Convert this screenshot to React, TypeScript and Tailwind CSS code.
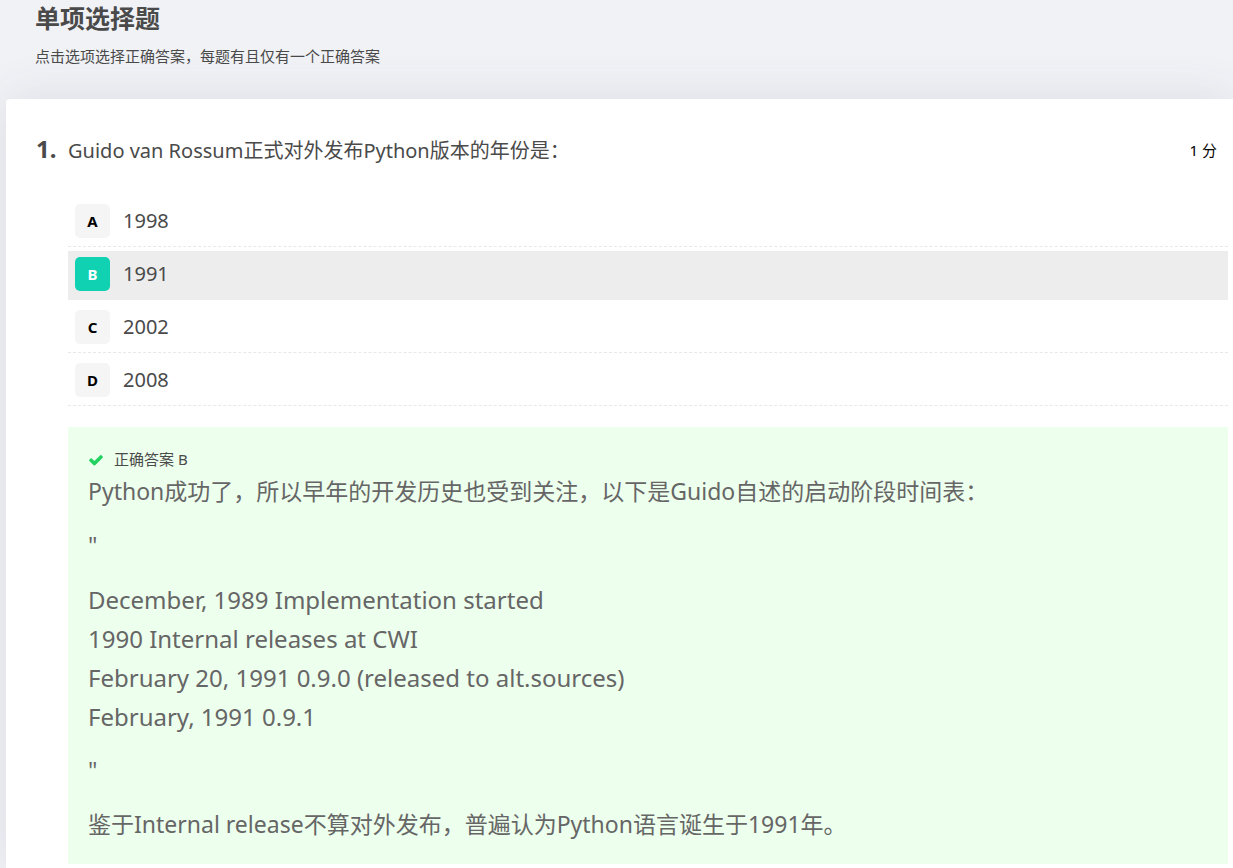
import React, { useState } from "react";

const options = [
	{ key: "A", text: "1998" },
	{ key: "B", text: "1991" },
	{ key: "C", text: "2002" },
	{ key: "D", text: "2008" },
];

const Option = ({
	label,
	text,
	active,
	onSelect,
}: {
	label: string;
	text: string;
	active: boolean;
	onSelect: () => void;
}) => {
	return (
		<button
			type="button"
			aria-pressed={active}
			onClick={onSelect}
			className={`flex h-[49px] w-full items-center gap-[13px] border-b border-dashed pb-[2px] pl-[7px] text-left ${
				active ? "border-[#ededed] bg-[#ededed]" : "border-[#e8e8e8]"
			}`}
		>
			<span
				className={`flex h-[34px] w-[35px] items-center justify-center rounded-[5px] text-[15px] font-bold ${
					active ? "bg-[#11d1b3] text-white" : "bg-[#f5f5f5] text-black"
				}`}
			>
				{label}
			</span>
			<span className="text-xl text-[#4a4a4a]">{text}</span>
		</button>
	);
};

const Answer = () => {
	return (
		<div className="mt-[21px] bg-[#edffed] p-5">
			<div className="flex h-[25px] items-center gap-[10px] text-[15px] text-[#4a4a4a]">
				<svg viewBox="0 0 1792 1792" className="size-4 fill-[#23d160]" aria-hidden="true">
					<path d="M1671 566q0 40-28 68l-724 724-136 136q-28 28-68 28t-68-28l-136-136-362-362q-28-28-28-68t28-68l136-136q28-28 68-28t68 28l294 295 656-657q28-28 68-28t68 28l136 136q28 28 28 68z" />
				</svg>
				<span>正确答案 B</span>
			</div>
			<div className="space-y-[15px] text-[23px] leading-[39px] text-[#666]">
				<p>Python成功了，所以早年的开发历史也受到关注，以下是Guido自述的启动阶段时间表：</p>
				<p>"</p>
				<p className="text-[24px] leading-[39px]">
					December, 1989 Implementation started
					<br />
					1990 Internal releases at CWI
					<br />
					February 20, 1991 0.9.0 (released to alt.sources)
					<br />
					February, 1991 0.9.1
				</p>
				<p>"</p>
				<p>鉴于Internal release不算对外发布，普遍认为Python语言诞生于1991年。</p>
			</div>
		</div>
	);
};

const App = () => {
	const [selected, setSelected] = useState("B");

	return (
		<main className="flex min-h-screen flex-col overflow-hidden bg-[#f1f2f6] font-['Noto_Sans','Noto_Sans_CJK_SC',sans-serif]">
			<header className="h-[99px] px-[35px] text-[#4a4a4a]">
				<h1 className="text-[25px] leading-9 font-bold">单项选择题</h1>
				<p className="mt-[9px] text-[15px] leading-[22px]">点击选项选择正确答案，每题有且仅有一个正确答案</p>
			</header>
			<section className="ml-[6px] grow rounded-tl bg-white pt-[31px] pr-[5px] pb-1 pl-[30px] shadow-[0_0_50px_rgba(60,70,90,0.12)]">
				<div className="flex items-baseline text-[#4a4a4a]">
					<h2 className="w-8 text-2xl leading-[38px] font-bold">1.</h2>
					<p className="grow text-xl leading-[38px]">Guido van Rossum正式对外发布Python版本的年份是：</p>
					<span className="self-center pr-[11px] text-[15px] text-black">1 分</span>
				</div>
				<div className="ml-8 pt-7">
					<div className="flex flex-col gap-1">
						{options.map((item) => (
							<Option
								key={item.key}
								label={item.key}
								text={item.text}
								active={selected === item.key}
								onSelect={() => setSelected(item.key)}
							/>
						))}
					</div>
					<Answer />
				</div>
			</section>
		</main>
	);
};

export default App;
